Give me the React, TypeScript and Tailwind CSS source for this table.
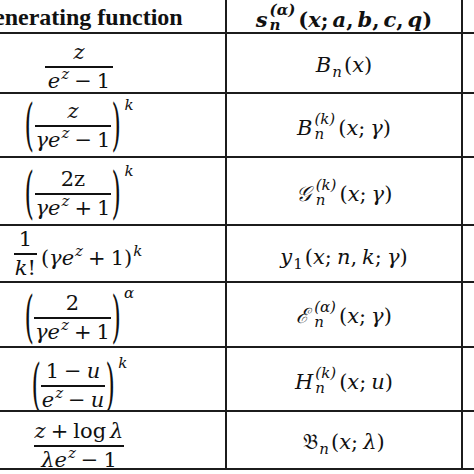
import React from "react";

const LINE = "border-[#1c1c1c]";

function I({ children }: { children: React.ReactNode }) {
  return <span className="italic">{children}</span>;
}

function Op({ children }: { children: React.ReactNode }) {
  return <span className="mx-[5px]">{children}</span>;
}

function Sup({ children }: { children: React.ReactNode }) {
  return <span className="relative -top-[9px] ml-[1px] text-[15px] italic">{children}</span>;
}

function Sub({ children, upright }: { children: React.ReactNode; upright?: boolean }) {
  return <span className={`relative top-[5px] ml-[1px] text-[15px] ${upright ? "" : "italic"}`}>{children}</span>;
}

// stacked super/subscript like B_n^(k)
function SupSub({ sup, sub, gap = "ml-[2px]" }: { sup: React.ReactNode; sub: React.ReactNode; gap?: string }) {
  return (
    <span className={`${gap} mr-[3px] inline-flex flex-col items-start text-[15px] leading-[15px] italic`}>
      <span className="-mt-[4px]">{sup}</span>
      <span>{sub}</span>
    </span>
  );
}

function Frac({ num, den, line = "w-full" }: { num: React.ReactNode; den: React.ReactNode; line?: string }) {
  return (
    <span className="inline-flex flex-col items-center">
      <span className="whitespace-nowrap px-[1px] leading-[23px]">{num}</span>
      <span className={`my-[2px] h-[2px] bg-[#111] ${line}`} />
      <span className="whitespace-nowrap px-[1px] leading-[23px]">{den}</span>
    </span>
  );
}

function Paren({ side }: { side: "(" | ")" }) {
  return (
    <span className="flex h-[52px] w-[10px] items-center justify-center">
      <span className="inline-block scale-x-[1.15] scale-y-[2.7]">{side}</span>
    </span>
  );
}

function Ez() {
  return (
    <>
      <I>e</I>
      <Sup>z</Sup>
    </>
  );
}

function PowK({ children, mt = "-mt-[4px]" }: { children: React.ReactNode; mt?: string }) {
  return <span className={`ml-[3px] self-start text-[15px] italic ${mt}`}>{children}</span>;
}

const rows: { h: string; left: React.ReactNode; right: React.ReactNode }[] = [
  {
    h: "h-[60px]",
    left: (
      <span className="mt-[5px]">
        <Frac num={<I>z</I>} den={<><Ez /><Op>−</Op>1</>} line="w-[68px]" />
      </span>
    ),
    right: (
      <span className="mt-[6px]">
        <I>B</I>
        <Sub>n</Sub>
        <span className="ml-[2px]">(</span><I>x</I>)
      </span>
    ),
  },
  {
    h: "h-[64px]",
    left: (
      <span className="mt-[3px] flex items-center">
        <Paren side="(" />
        <Frac num={<I>z</I>} den={<><I>γ</I><Ez /><Op>−</Op>1</>} />
        <Paren side=")" />
        <PowK mt="-mt-[6px]">k</PowK>
      </span>
    ),
    right: (
      <span className="mt-[8px] flex items-center">
        <I>B</I>
        <SupSub sup="(k)" sub="n" />(<I>x</I>;<span className="ml-[5px]" /><I>γ</I>)
      </span>
    ),
  },
  {
    h: "h-[68px]",
    left: (
      <span className="mt-[8px] flex items-center">
        <Paren side="(" />
        <Frac num="2z" den={<><I>γ</I><Ez /><Op>+</Op>1</>} />
        <Paren side=")" />
        <PowK mt="-mt-[8px]">k</PowK>
      </span>
    ),
    right: (
      <span className="mt-[8px] flex items-center">
        <I>𝒢</I>
        <SupSub sup="(k)" sub="n" gap="ml-[5px]" />(<I>x</I>;<span className="ml-[5px]" /><I>γ</I>)
      </span>
    ),
  },
  {
    h: "h-[57px]",
    left: (
      <span className="-ml-[2px] flex items-center">
        <Frac num="1" den={<><I>k</I>!</>} />
        <span className="ml-[4px] mt-[11px]">
          (<I>γ</I><Ez /><Op>+</Op>1)<Sup>k</Sup>
        </span>
      </span>
    ),
    right: (
      <span className="mt-[8px]">
        <I>y</I>
        <Sub upright>1</Sub>
        <span className="ml-[2px]">(</span><I>x</I>;<span className="ml-[5px]" /><I>n</I>,<span className="ml-[5px]" /><I>k</I>;<span className="ml-[5px]" /><I>γ</I>)
      </span>
    ),
  },
  {
    h: "h-[65px]",
    left: (
      <span className="mt-[8px] flex items-center">
        <Paren side="(" />
        <Frac num="2" den={<><I>γ</I><Ez /><Op>+</Op>1</>} />
        <Paren side=")" />
        <PowK mt="-mt-[10px]">α</PowK>
      </span>
    ),
    right: (
      <span className="mt-[4px] flex items-center">
        <I>ℰ</I>
        <SupSub sup="(α)" sub="n" gap="ml-[5px]" />(<I>x</I>;<span className="ml-[5px]" /><I>γ</I>)
      </span>
    ),
  },
  {
    h: "h-[64px]",
    left: (
      <span className="mt-[16px] flex items-center">
        <Paren side="(" />
        <Frac num={<>1<Op>−</Op><I>u</I></>} den={<><Ez /><Op>−</Op><I>u</I></>} />
        <Paren side=")" />
        <PowK mt="-mt-[8px]">k</PowK>
      </span>
    ),
    right: (
      <span className="mt-[8px] flex items-center">
        <I>H</I>
        <SupSub sup="(k)" sub="n" />(<I>x</I>;<span className="ml-[5px]" /><I>u</I>)
      </span>
    ),
  },
  {
    h: "h-[58px]",
    left: (
      <span className="mt-[10px]">
        <Frac num={<><I>z</I><Op>+</Op>log<span className="ml-[4px]" /><I>λ</I></>} den={<><I>λ</I><Ez /><Op>−</Op>1</>} />
      </span>
    ),
    right: (
      <span className="mt-[6px]">
        𝔅
        <Sub>n</Sub>
        <span className="ml-[2px]">(</span><I>x</I>;<span className="ml-[5px]" /><I>λ</I>)
      </span>
    ),
  },
];

export default function App() {
  return (
    <div className="h-[474px] w-[474px] overflow-hidden bg-white text-[#111]">
      <div className="-ml-[67px] w-[600px] font-['DejaVu_Serif',serif] text-[21px]">
        <div className={`flex h-[34px] border-b-2 ${LINE}`}>
          <div className={`flex w-[294px] items-center justify-center border-r-2 ${LINE} pt-[2px] font-['Liberation_Serif',serif] text-[24px] font-bold`}>
            Generating function
          </div>
          <div className={`flex w-[236px] items-center justify-center overflow-hidden border-r-2 ${LINE} font-bold`}>
            <span className="mt-[8px] flex items-center">
              <I>s</I>
              <SupSub sup="(α)" sub="n" />(<I>x</I>;<span className="ml-[4px]" /><I>a</I>,<span className="ml-[4px]" /><I>b</I>,<span className="ml-[4px]" /><I>c</I>,<span className="ml-[4px]" /><I>q</I>)
            </span>
          </div>
          <div className="flex-1" />
        </div>
        {rows.map((r, i) => (
          <div key={i} className={`flex ${r.h} border-b-2 ${LINE}`}>
            <div className={`flex w-[294px] items-center justify-center overflow-hidden border-r-2 ${LINE}`}>{r.left}</div>
            <div className={`flex w-[236px] items-center justify-center border-r-2 ${LINE}`}>{r.right}</div>
            <div className="flex-1" />
          </div>
        ))}
      </div>
    </div>
  );
}
